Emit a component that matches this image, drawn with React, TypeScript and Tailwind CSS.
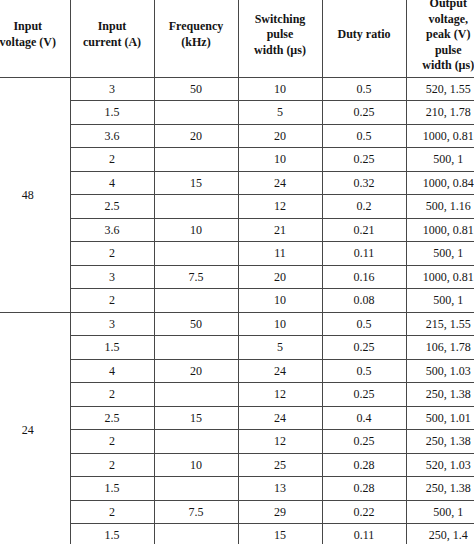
import React from 'react';

type Row = [string, string, string, string, string];

interface Group {
  voltage: string;
  rows: Row[];
}

// current, frequency, pulse width, duty ratio, output
const groups: Group[] = [
  {
    voltage: '48',
    rows: [
      ['3', '50', '10', '0.5', '520, 1.55'],
      ['1.5', '', '5', '0.25', '210, 1.78'],
      ['3.6', '20', '20', '0.5', '1000, 0.81'],
      ['2', '', '10', '0.25', '500, 1'],
      ['4', '15', '24', '0.32', '1000, 0.84'],
      ['2.5', '', '12', '0.2', '500, 1.16'],
      ['3.6', '10', '21', '0.21', '1000, 0.81'],
      ['2', '', '11', '0.11', '500, 1'],
      ['3', '7.5', '20', '0.16', '1000, 0.81'],
      ['2', '', '10', '0.08', '500, 1'],
    ],
  },
  {
    voltage: '24',
    rows: [
      ['3', '50', '10', '0.5', '215, 1.55'],
      ['1.5', '', '5', '0.25', '106, 1.78'],
      ['4', '20', '24', '0.5', '500, 1.03'],
      ['2', '', '12', '0.25', '250, 1.38'],
      ['2.5', '15', '24', '0.4', '500, 1.01'],
      ['2', '', '12', '0.25', '250, 1.38'],
      ['2', '10', '25', '0.28', '520, 1.03'],
      ['1.5', '', '13', '0.28', '250, 1.38'],
      ['2', '7.5', '29', '0.22', '500, 1'],
      ['1.5', '', '15', '0.11', '250, 1.4'],
    ],
  },
];

const headers: string[][] = [
  ['Input', 'voltage (V)'],
  ['Input', 'current (A)'],
  ['Frequency', '(kHz)'],
  ['Switching', 'pulse', 'width (µs)'],
  ['Duty ratio'],
  ['Output', 'voltage,', 'peak (V)', 'pulse', 'width (µs)'],
];

const App: React.FC = () => {
  return (
    <div
      className="w-[474px] h-[544px] overflow-hidden bg-white text-[#141414]"
      style={{ fontFamily: '"Liberation Serif", "Times New Roman", serif' }}
    >
      <table className="-ml-[14px] -mt-[7px] w-[504px] table-fixed border-collapse text-[12px]">
        <colgroup>
          {headers.map((_, i) => (
            <col key={i} className="w-[84px]" />
          ))}
        </colgroup>
        <thead>
          <tr>
            {headers.map((lines, i) => (
              <th
                key={i}
                className={`h-[84px] p-0 text-center align-middle font-bold leading-[15.5px] border-b border-[#474747] ${
                  i > 0 ? 'border-l' : ''
                }`}
              >
                {lines.map((l, j) => (
                  <div key={j}>{l}</div>
                ))}
              </th>
            ))}
          </tr>
        </thead>
        <tbody>
          {groups.map((g) =>
            g.rows.map((row, r) => (
              <tr key={g.voltage + r} className="h-[23.5px]">
                {r === 0 && (
                  <td
                    rowSpan={g.rows.length}
                    className="p-0 text-center align-middle border-b border-[#474747]"
                  >
                    {g.voltage}
                  </td>
                )}
                {row.map((cell, c) => (
                  <td
                    key={c}
                    className="h-[23.5px] p-0 text-center align-middle leading-none border-l border-b border-[#474747]"
                  >
                    {cell}
                  </td>
                ))}
              </tr>
            ))
          )}
        </tbody>
      </table>
    </div>
  );
};

export default App;
